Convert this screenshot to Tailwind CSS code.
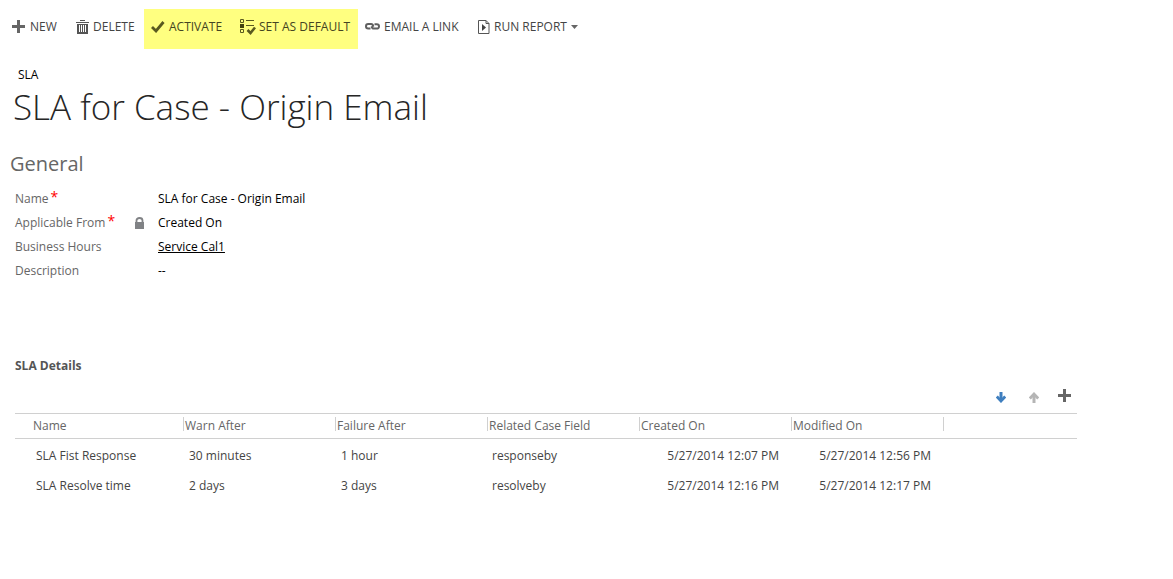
<!DOCTYPE html>
<html lang="en">
<head>
  <meta charset="UTF-8" />
  <meta name="viewport" content="width=device-width, initial-scale=1.0"/>
  <title>SLA: SLA for Case - Origin Email</title>
  <script src="https://cdn.jsdelivr.net/npm/@tailwindcss/browser@4"></script>
</head>
<body class="bg-white font-['Open_Sans','Noto_Sans',sans-serif] text-xs text-[#444]">

  <!-- Command bar -->
  <nav class="flex items-center h-10 mt-[9px] pl-3 pb-[5px] text-[#444] whitespace-nowrap">
    <button class="flex items-center gap-[5px] w-16">
      <svg class="w-[13px] h-[13px]" viewBox="0 0 13 13" fill="#666"><path d="M5 0h3v5h5v3H8v5H5V8H0V5h5z"/></svg>
      NEW
    </button>
    <button class="flex items-center gap-1 w-[68px]">
      <svg class="w-[13px] h-[14px]" viewBox="0 0 13 14" fill="#555"><path d="M4 0h5v1H4zM0 2h13v1H0zM1 4h11v10H1zM3 5v7h1V5zM5 5v7h1V5zM7 5v7h1V5zM9 5v7h1V5z" fill-rule="evenodd"/></svg>
      DELETE
    </button>
    <div class="flex items-center self-stretch h-10 pb-[5px] pl-[7px] bg-[#ffff80] text-[#444422] w-[214px]">
      <button class="flex items-center gap-1 w-[89px]">
        <svg class="w-[14px] h-[12px]" viewBox="0 0 14 12" fill="none" stroke="#5a5a20" stroke-width="2.8"><path d="M1 6l4 4L12.500 1"/></svg>
        ACTIVATE
      </button>
      <button class="flex items-center gap-[3px]">
        <svg class="w-4 h-4" viewBox="0 0 16 16" fill="none" stroke="#5a5a20"><path d="M.5.500h3v3h-3zM.5 10.500h3v3h-3zM6 1.500h8M6 6.500h8"/><path d="M0 5h4v4H0z" fill="#444410" stroke="none"/><path d="M7.500 11l3 3L15 8.500" stroke-width="2.600"/></svg>
        SET AS DEFAULT
      </button>
    </div>
    <button class="flex items-center gap-1 pl-[7px] w-[120px]">
      <svg class="w-[15px] h-[7px]" viewBox="0 0 15 7" fill="none" stroke="#606060" stroke-width="2"><path d="M5.500 5.500H3.200a2.200 2.200 0 0 1 0-4.400H6c1.300 0 2.200 1 2.200 2.600M9.500 1.200h2.300a2.200 2.200 0 0 1 0 4.400H9C7.700 5.600 6.800 4.700 6.800 3.200"/></svg>
      EMAIL A LINK
    </button>
    <button class="flex items-center gap-1">
      <svg class="w-3 h-[14px]" viewBox="0 0 12 14" fill="none" stroke="#555"><path d="M.5.5h7.500l3 3v10H.5zM8 .5v3h3"/><path d="M4 4l4 3.500L4 11z" fill="#444" stroke="none"/></svg>
      RUN REPORT
      <svg class="w-[7px] h-1" viewBox="0 0 7 4" fill="#666"><path d="M0 0h7L3.500 4z"/></svg>
    </button>
  </nav>

  <!-- Record header -->
  <header class="pl-[13px] pt-[18px]">
    <p class="pl-[5px] leading-4 text-black">SLA</p>
    <h1 class="text-[35px] leading-[48px] font-light text-[#262626]">SLA for Case - Origin Email</h1>
  </header>

  <!-- General -->
  <section class="mt-[17px]">
    <h2 class="pl-[10px] text-xl leading-8 text-[#666]">General</h2>
    <dl class="grid grid-cols-[119px_24px_1fr] auto-rows-[24px] items-center pl-[15px] mt-[7px] text-black">
      <dt class="flex items-center gap-0.5 text-[#666]">Name<span class="text-sm leading-4 pb-1 text-[#f00]">*</span></dt>
      <dd></dd>
      <dd>SLA for Case - Origin Email</dd>

      <dt class="flex items-center gap-0.5 text-[#666]">Applicable From<span class="text-sm leading-4 pb-1 text-[#f00]">*</span></dt>
      <dd>
        <svg class="w-[11px] h-3" viewBox="0 0 11 12"><path d="M2.500 6V3.500Q2.500 1 5.500 1T8.500 3.500V6" fill="none" stroke="#808285" stroke-width="1.800"/><path d="M1 5h9v7H1z" fill="#808285"/></svg>
      </dd>
      <dd>Created On</dd>

      <dt class="text-[#666]">Business Hours</dt>
      <dd></dd>
      <dd><a href="#" class="underline">Service Cal1</a></dd>

      <dt class="text-[#666]">Description</dt>
      <dd></dd>
      <dd>--</dd>
    </dl>
  </section>

  <!-- SLA details grid -->
  <section class="mt-[75px] ml-[15px] mr-24">
    <h3 class="font-bold leading-4 text-[#555]">SLA Details</h3>
    <div class="flex items-center justify-end h-[39px] pt-2 pr-[6px]">
      <button aria-label="Move down" class="mr-[23px]">
        <svg class="w-[10px] h-[11px]" viewBox="0 0 10 11" fill="none" stroke="#3f7fbf"><path d="M5 0v9" stroke-width="3"/><path d="M.8 4.500L5 9l4.200-4.500" stroke-width="2.800"/></svg>
      </button>
      <button aria-label="Move up" class="mr-[19px]">
        <svg class="w-[10px] h-[11px]" viewBox="0 0 10 11" fill="none" stroke="#b5b5b5"><path d="M5 11V2" stroke-width="3"/><path d="M.8 6.500L5 2l4.200 4.500" stroke-width="2.800"/></svg>
      </button>
      <button aria-label="Add record" class="pb-1">
        <svg class="w-[13px] h-[13px]" viewBox="0 0 13 13" fill="#666"><path d="M5 0h3v5h5v3H8v5H5V8H0V5h5z"/></svg>
      </button>
    </div>
    <table class="w-full table-fixed">
      <thead class="border-y border-[#d0d0d0] text-left text-[#666]">
        <tr class="h-[25px] align-top">
          <th class="w-[168px] pl-[18px] pt-1 font-normal leading-4">Name</th>
          <th class="w-[152px] pt-[3px] font-normal"><div class="h-[14px] border-l border-[#d0d0d0] pl-px pt-px leading-4">Warn After</div></th>
          <th class="w-[152px] pt-[3px] font-normal"><div class="h-[14px] border-l border-[#d0d0d0] pl-px pt-px leading-4">Failure After</div></th>
          <th class="w-[152px] pt-[3px] font-normal"><div class="h-[14px] border-l border-[#d0d0d0] pl-px pt-px leading-4">Related Case Field</div></th>
          <th class="w-[152px] pt-[3px] font-normal"><div class="h-[14px] border-l border-[#d0d0d0] pl-px pt-px leading-4">Created On</div></th>
          <th class="w-[152px] pt-[3px] font-normal"><div class="h-[14px] border-l border-[#d0d0d0] pl-px pt-px leading-4">Modified On</div></th>
          <td class="pt-[3px]"><div class="h-[14px] border-l border-[#d0d0d0]"></div></td>
        </tr>
      </thead>
      <tbody>
        <tr class="h-8">
          <td class="pl-[21px] pt-[2px]">SLA Fist Response</td>
          <td class="pl-[6px] pt-[2px]">30 minutes</td>
          <td class="pl-[6px] pt-[2px]">1 hour</td>
          <td class="pl-[5px] pt-[2px]">responseby</td>
          <td class="pr-3 pt-[2px] text-right">5/27/2014 12:07 PM</td>
          <td class="pr-3 pt-[2px] text-right">5/27/2014 12:56 PM</td>
          <td></td>
        </tr>
        <tr class="h-[30px]">
          <td class="pl-[21px]">SLA Resolve time</td>
          <td class="pl-[6px]">2 days</td>
          <td class="pl-[6px]">3 days</td>
          <td class="pl-[5px]">resolveby</td>
          <td class="pr-3 text-right">5/27/2014 12:16 PM</td>
          <td class="pr-3 text-right">5/27/2014 12:17 PM</td>
          <td></td>
        </tr>
      </tbody>
    </table>
  </section>

</body>
</html>
